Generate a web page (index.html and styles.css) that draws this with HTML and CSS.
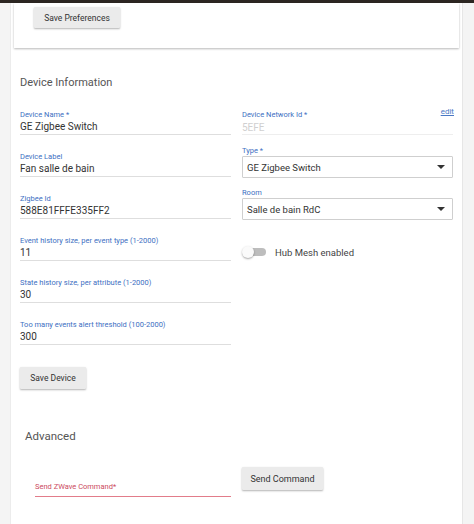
FILE: index.html
```html
<!DOCTYPE html>
<html>
<head>
<meta charset="utf-8">
<link rel="stylesheet" href="styles.css">
</head>
<body>
<div class="topbar"></div>
<div class="page">
  <div class="card-prefs">
    <button class="btn btn-prefs">Save Preferences</button>
  </div>
  <div class="section">
    <h2 class="heading">Device Information</h2>
    <div class="grid">
      <div class="col">
        <div class="field">
          <div class="label">Device Name *</div>
          <div class="value">GE Zigbee Switch</div>
        </div>
        <div class="field">
          <div class="label">Device Label</div>
          <div class="value">Fan salle de bain</div>
        </div>
        <div class="field">
          <div class="label">Zigbee Id</div>
          <div class="value">588E81FFFE335FF2</div>
        </div>
        <div class="field">
          <div class="label">Event history size, per event type (1-2000)</div>
          <div class="value">11</div>
        </div>
        <div class="field">
          <div class="label">State history size, per attribute (1-2000)</div>
          <div class="value">30</div>
        </div>
        <div class="field">
          <div class="label">Too many events alert threshold (100-2000)</div>
          <div class="value">300</div>
        </div>
      </div>
      <div class="col">
        <div class="field field-dni">
          <div class="label">Device Network Id *</div>
          <div class="value value-disabled">5EFE</div>
          <a class="edit">edit</a>
        </div>
        <div class="select-field select-type">
          <div class="label">Type *</div>
          <div class="select"><span>GE Zigbee Switch</span><span class="caret"></span></div>
        </div>
        <div class="select-field select-room">
          <div class="label">Room</div>
          <div class="select"><span>Salle de bain RdC</span><span class="caret"></span></div>
        </div>
        <div class="toggle-row">
          <span class="toggle"><span class="knob"></span></span>
          <span class="toggle-label">Hub Mesh enabled</span>
        </div>
      </div>
    </div>
    <button class="btn btn-save">Save Device</button>
  </div>
  <div class="advanced">
    <h2 class="heading heading-adv">Advanced</h2>
    <div class="cmd-row">
      <div class="cmd-field">
        <div class="cmd-label">Send ZWave Command*</div>
      </div>
      <button class="btn btn-cmd">Send Command</button>
    </div>
  </div>
</div>
</body>
</html>
```

FILE: styles.css
```css
* { box-sizing: border-box; }
html, body { margin: 0; padding: 0; }
body {
  background: #f4f4f4;
  font-family: Roboto, "Liberation Sans", Arial, sans-serif;
  color: #333;
  width: 474px;
  height: 524px;
  overflow: hidden;
}
.topbar {
  height: 3px;
  background: #2c2622;
}
.page {
  margin: 0 11px 0 10px;
  background: #fff;
  border-left: 1px solid #ececec;
  border-right: 1px solid #e6e6e6;
  height: 521px;
}
.card-prefs {
  margin: 0 3px 0 3px;
  height: 45px;
  padding: 4px 0 0 20px;
  background: #fff;
  box-shadow: 0 1px 2px rgba(0,0,0,0.28);
}
.btn {
  display: block;
  border: none;
  background: #ebebeb;
  color: #333;
  font-family: Roboto, "Liberation Sans", Arial, sans-serif;
  font-size: 8.5px;
  height: 21px;
  padding: 0 10px;
  border-radius: 1px;
  box-shadow: 0 1px 2px rgba(0,0,0,0.3);
}
.btn-prefs { width: 86px; }
.section {
  padding: 27px 9px 0 9px;
}
.heading {
  margin: 0;
  font-size: 11px;
  line-height: 16px;
  font-weight: 400;
  color: #555;
}
.heading-adv { font-size: 11.5px; }
.grid {
  display: grid;
  grid-template-columns: 211px 211px;
  column-gap: 11px;
  margin-top: 18px;
}
.col { display: flex; flex-direction: column; }
.field {
  margin-bottom: 16px;
  position: relative;
}
.label {
  font-size: 7.5px;
  line-height: 11px;
  color: #3d6fc2;
  white-space: nowrap;
}
.value {
  font-size: 10px;
  line-height: 14px;
  color: #333;
  border-bottom: 1px solid #dedede;
}
.value-disabled { color: #d0d0d0; border-bottom-color: #eeeeee; }
.field-dni .value { height: 15px; line-height: 15px; }
.edit {
  position: absolute;
  right: -1px;
  top: -2px;
  font-size: 8px;
  line-height: 10px;
  color: #4a78c4;
  text-decoration: underline;
}
.field-dni { margin-bottom: 10px; }
.select-field { margin-bottom: 9px; }
.select {
  height: 22px;
  border: 1px solid #cfcfcf;
  border-radius: 1px;
  display: flex;
  align-items: center;
  justify-content: space-between;
  padding: 0 7px 0 4px;
  font-size: 9.5px;
  color: #333;
}
.caret {
  width: 0; height: 0;
  border-left: 4px solid transparent;
  border-right: 4px solid transparent;
  border-top: 4px solid #333;
}
.toggle-row {
  margin-top: 16px;
  display: flex;
  align-items: center;
  height: 14px;
}
.toggle {
  position: relative;
  width: 21px;
  height: 8px;
  border-radius: 4px;
  background: #bdbdbd;
  margin-left: 3px;
}
.knob {
  position: absolute;
  left: -3px;
  top: -2px;
  width: 12px;
  height: 12px;
  border-radius: 50%;
  background: #fafafa;
  box-shadow: 0 1px 2px rgba(0,0,0,0.35);
}
.toggle-label {
  margin-left: 9px;
  font-size: 9.5px;
  color: #444;
}
.btn-save {
  margin-top: 6px;
  width: 66px;
  height: 22px;
  padding: 0;
}
.advanced {
  padding: 39px 9px 0 14px;
}
.cmd-row {
  display: flex;
  align-items: flex-start;
  margin-top: 23px;
}
.cmd-field {
  width: 196px;
  margin-left: 10px;
  margin-top: 14px;
  border-bottom: 1px solid #e27c8a;
  padding-bottom: 4px;
}
.cmd-label {
  font-size: 7.5px;
  line-height: 11px;
  color: #cc4a5e;
}
.btn-cmd {
  margin-left: 11px;
  width: 81px;
  height: 23px;
  padding: 0;
  font-size: 9px;
}
```
